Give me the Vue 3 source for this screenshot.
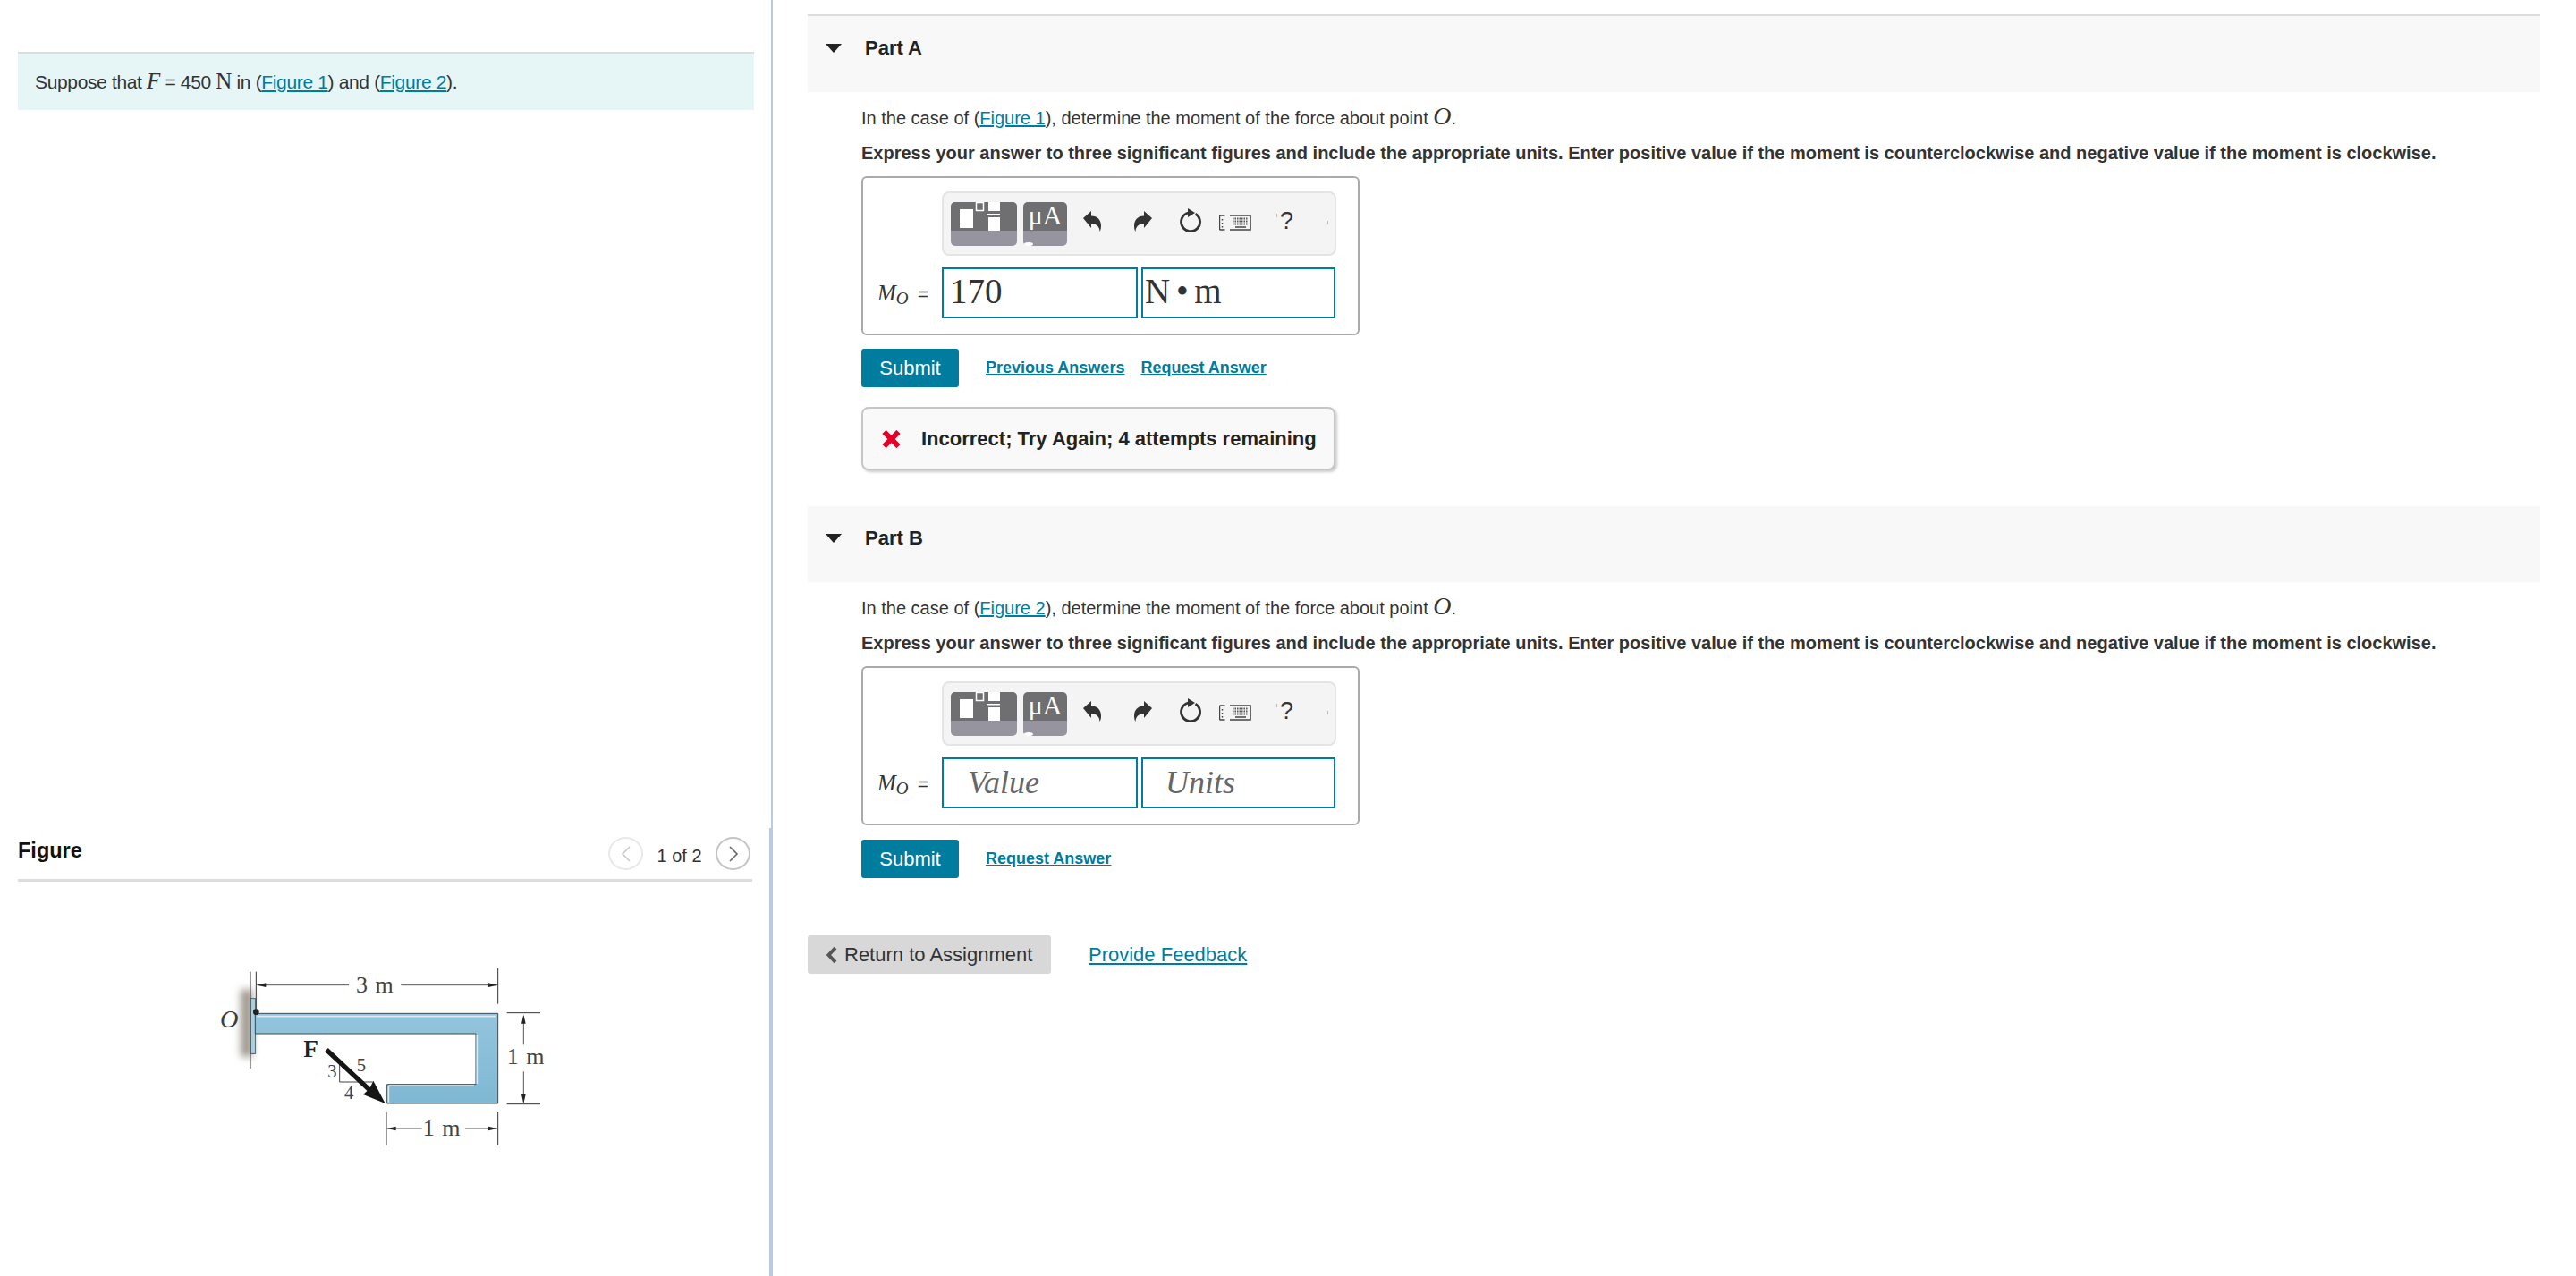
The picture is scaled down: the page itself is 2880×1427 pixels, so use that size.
<script setup>
const parts = [
  { id: 'A', fig: 'Figure 1', value: '170', units: 'N • m', answered: true },
  { id: 'B', fig: 'Figure 2', value: 'Value', units: 'Units', answered: false },
]
</script>

<template>
  <div class="page">
    <aside class="left">
      <div class="intro">
        Suppose that <i class="tex">F</i> = 450 <span class="texn">N</span> in (<a>Figure 1</a>) and (<a>Figure 2</a>).
      </div>
      <div class="fig-head">
        <h2>Figure</h2>
        <div class="pager">
          <span class="circ off"><svg width="14" height="20" viewBox="0 0 14 20"><path d="M11 2 3 10l8 8" fill="none" stroke="#c8c8c8" stroke-width="1.6"/></svg></span>
          <span class="count">1 of 2</span>
          <span class="circ"><svg width="14" height="20" viewBox="0 0 14 20"><path d="m3 2 8 8-8 8" fill="none" stroke="#666" stroke-width="1.6"/></svg></span>
        </div>
      </div>
      <svg class="figure" width="440" height="240" viewBox="0 0 1320 720">
        <defs>
          <filter id="blur" x="-100%" y="-30%" width="300%" height="160%"><feGaussianBlur stdDeviation="12"/></filter>
          <linearGradient id="steel" x1="0" y1="0" x2="0" y2="1"><stop offset="0" stop-color="#93c5dc"/><stop offset="1" stop-color="#7fb8d4"/></linearGradient>
        </defs>
        <rect x="208" y="140" width="38" height="225" fill="#9b958a" filter="url(#blur)"/>
        <path d="M240 80v325M259 80v140" stroke="#333" stroke-width="3" fill="none"/>
        <rect x="241" y="170" width="16" height="185" fill="#a9cfdf" stroke="#3a4a52" stroke-width="2.500"/>
        <path d="M256 220H1070V522H698V458H996V288H256Z" fill="url(#steel)" stroke="#3d4a52" stroke-width="3"/>
        <path d="M262 230H1062M703 462H990M1000 292V456M703 462V518" stroke="#dfe9ee" stroke-width="5" fill="none"/>
        <circle cx="259" cy="215" r="10" fill="#222"/>
        <path d="M1070 68v120M1100 218h112M1100 524h112M696 552v110M1070 552v110" stroke="#333" stroke-width="3" fill="none"/>
        <path d="M262 125H570M745 125H1068M1156 230V325M1156 415V518M698 606H815M960 606H1068" stroke="#333" stroke-width="2.500" fill="none"/>
        <path d="M262 125l30-7v14zM1068 125l-30-7v14zM1156 224l-7 30h14zM1156 522l-7-30h14zM698 606l30-7v14zM1068 606l-30-7v14z" fill="#222"/>
        <path d="M539 390V450H650" stroke="#444" stroke-width="3" fill="none"/>
        <path d="M495 342 645 482" stroke="#151515" stroke-width="16"/>
        <path d="M692 522 618 492 640 472 652 446Z" fill="#151515"/>
        <text x="594" y="150" class="fig-t">3 m</text>
        <text x="1100" y="391" class="fig-t">1 m</text>
        <text x="818" y="631" class="fig-t">1 m</text>
        <text x="138" y="266" class="fig-o">O</text>
        <text x="418" y="366" class="fig-f">F</text>
        <text x="499" y="436" class="fig-s">3</text>
        <text x="596" y="413" class="fig-s">5</text>
        <text x="555" y="506" class="fig-s">4</text>
      </svg>
    </aside>

    <main class="right">
      <section v-for="p in parts" :key="p.id" class="part" :class="'part-' + p.id">
        <header class="part-head">
          <span class="tri"></span>
          <h3>Part {{ p.id }}</h3>
        </header>
        <div class="body">
          <p class="q">In the case of (<a>{{ p.fig }}</a>), determine the moment of the force about point <i class="pt">O</i>.</p>
          <p class="ex">Express your answer to three significant figures and include the appropriate units. Enter positive value if the moment is counterclockwise and negative value if the moment is clockwise.</p>
          <div class="answer">
            <div class="toolbar">
              <svg class="tb1" width="74" height="49" viewBox="0 0 74 49">
                <rect width="74" height="49" rx="5" fill="#96949e"/>
                <path d="M0 32V5a5 5 0 0 1 5-5h64a5 5 0 0 1 5 5v27Z" fill="#6f6f71"/>
                <rect x="10" y="8" width="15" height="21" fill="#fff"/>
                <rect x="28.500" y="0.500" width="8" height="9" fill="none" stroke="#fff" stroke-width="1.500"/>
                <rect x="42" y="0" width="13" height="10" fill="#fff"/>
                <rect x="40" y="13" width="15" height="1.500" fill="#fff"/>
                <rect x="42" y="17" width="13" height="15" fill="#fff"/>
              </svg>
              <div class="tb2"><span>μA</span></div>
              <svg class="ic undo" width="21" height="24" viewBox="0 0 21 24"><path d="M0 9 9 1v5.500c7 0 11 4.500 11 11 0 2.500-.5 5-1.500 6.500 0-5-3.500-9-9.500-9v5Z" fill="#333"/></svg>
              <svg class="ic redo" width="21" height="24" viewBox="0 0 21 24"><path d="M21 9 12 1v5.500C5 6.500 1 11 1 17.500c0 2.500.5 5 1.500 6.500 0-5 3.500-9 9.500-9v5Z" fill="#333"/></svg>
              <svg class="ic refresh" width="24" height="26" viewBox="0 0 24 26"><path d="M17.500 6.200A10.500 10.500 0 1 1 9.500 5" fill="none" stroke="#333" stroke-width="2.800"/><path d="M9 0l8 5-8 5Z" fill="#333"/></svg>
              <svg class="ic kbd" width="36" height="18" viewBox="0 0 36 18"><path d="M6.500 1H1.500a1 1 0 0 0-1 1v14a1 1 0 0 0 1 1h5" fill="none" stroke="#444" stroke-width="1.400"/><path d="M3.500 5v1.500M3.500 9v1.500M3.500 13v1.500" stroke="#444" stroke-width="1.500"/><path d="M12 1h23v16H12" fill="none" stroke="#444" stroke-width="1.600"/><path d="M15 4.500h17M15 7.500h17M15 10.500h17" stroke="#555" stroke-width="2" stroke-dasharray="1.500 1"/><path d="M18 14h12" stroke="#444" stroke-width="1.500"/></svg>
              <span class="help">?</span>
              <span class="tick t1"></span>
              <span class="tick t2"></span>
            </div>
            <div class="inputs">
              <span class="mo"><i>M<sub>O</sub></i> <span class="eq">=</span></span>
              <div class="field" :class="{ ph: !p.answered, val: p.answered }">{{ p.value }}</div>
              <div class="field" :class="{ ph: !p.answered, unit: p.answered }">{{ p.units }}</div>
            </div>
          </div>
          <div class="actions">
            <button class="submit">Submit</button>
            <a v-if="p.answered" class="act first">Previous Answers</a>
            <a class="act" :class="{ first: !p.answered }">Request Answer</a>
          </div>
          <div v-if="p.answered" class="error">
            <svg width="21" height="20" viewBox="0 0 21 20"><path d="M2.500 2 18.500 18M18.500 2 2.500 18" stroke="#e2002b" stroke-width="6"/></svg>
            <strong>Incorrect; Try Again; 4 attempts remaining</strong>
          </div>
        </div>
      </section>
      <div class="foot">
        <button class="back"><svg width="13" height="20" viewBox="0 0 13 20"><path d="M11 2 3.500 10l7.500 8" fill="none" stroke="#555" stroke-width="4"/></svg>Return to Assignment</button>
        <a class="feedback">Provide Feedback</a>
      </div>
    </main>
  </div>
</template>

<style scoped>
.page { display: flex; width: 2880px; height: 1427px; background: #fff; color: #333; font-family: "Liberation Sans", Arial, sans-serif; overflow: hidden; }
a { color: #007c9e; text-decoration: underline; }
.left { width: 862px; flex: none; padding: 58px 19px 0 20px; box-sizing: border-box; position: relative; }
.left::after { content: ""; position: absolute; right: 0; top: 926px; bottom: 0; width: 2px; background: #b8cbe3; }
.right { flex: 1; border-left: 2px solid #b8cbe3; padding: 16px 40px 0 39px; min-width: 0; }
.intro { height: 65px; width: 823px; border-top: 2px solid #ddd; background: #e6f6f7; box-sizing: border-box; padding: 0 0 0 19px; line-height: 62px; font-size: 21px; letter-spacing: -0.35px; }
.tex, .texn { font-family: "Liberation Serif", serif; font-size: 25px; }
.fig-head { margin-top: 813px; height: 47px; border-bottom: 3px solid #ddd; display: flex; justify-content: space-between; width: 821px; }
.fig-head h2 { margin: 0; font-size: 23.500px; line-height: 30px; color: #111; }
.pager { display: flex; align-items: center; height: 37px; margin-right: 2px; }
.circ { width: 35px; height: 33px; border: 2px solid #c4c4c4; border-radius: 50%; display: flex; align-items: center; justify-content: center; }
.circ.off { border-color: #e8e8e8; }
.count { font-size: 20px; width: 81px; margin-top: 5px; text-align: center; color: #333; }
.figure { display: block; margin: 74px 0 0 180px; }
.fig-t { font: 78px "Liberation Serif", serif; letter-spacing: 3px; fill: #444; }
.fig-o { font: italic 85px "Liberation Serif", serif; fill: #3d3d3d; }
.fig-f { font: bold 82px "Liberation Serif", serif; fill: #222; }
.fig-s { font: 62px "Liberation Serif", serif; fill: #444; }

.part-head { display: flex; align-items: flex-start; background: #f8f8f8; height: 85px; }
.part-A .part-head { border-top: 2px solid #ddd; }
.part-B { margin-top: 40px; }
.tri { width: 0; height: 0; border: 9px solid transparent; border-top: 10px solid #222; border-bottom: 0; margin: 31px 0 0 20px; }
.part-head h3 { margin: 23px 0 0 26px; font-size: 22px; line-height: 26px; color: #222; }
.body { padding: 0 0 0 60px; }
.q { margin: 16px 0 0; font-size: 20px; line-height: 27px; color: #333; }
.pt { font-family: "Liberation Serif", serif; font-size: 28px; line-height: 20px; }
.ex { margin: 12px 0 0; font-size: 20px; line-height: 27px; font-weight: bold; color: #333; white-space: nowrap; }
.answer { margin-top: 12px; width: 557px; height: 178px; border: 2px solid #aaa; border-radius: 6px; box-sizing: border-box; padding: 15px 0 0 88px; }
.toolbar { display: flex; align-items: flex-start; width: 441px; height: 72px; background: #f4f4f4; border: 2px solid #e4e4e4; border-radius: 8px; box-sizing: border-box; padding: 10px 0 0 8px; position: relative; }
.tb2 { position: relative; width: 49px; height: 49px; margin-left: 7px; border-radius: 5px; background: linear-gradient(#6f6f71 0 65%, #96949e 65%); color: #fff; font: 30px/30px "Liberation Serif", serif; text-align: center; }
.tb2::after { content: ""; position: absolute; left: 1px; bottom: 0; width: 10px; height: 4px; border-radius: 50%; background: #fff; }
.ic { flex: none; }
.undo { margin: 9px 0 0 18px; }
.redo { margin: 9px 0 0 35px; }
.refresh { margin: 7px 0 0 31px; }
.kbd { margin: 14px 0 0 20px; }
.help { margin: 3px 0 0 32px; font-size: 27px; line-height: 36px; color: #333; }
.tick { position: absolute; width: 1px; height: 4px; background: #bbb; }
.t1 { left: 372px; top: 23px; }
.t2 { left: 429px; top: 31px; }
.inputs { display: flex; align-items: center; margin: 13px 0 0 -72px; }
.mo { width: 72px; font: 25px "Liberation Serif", serif; color: #333; white-space: nowrap; }
.mo sub { font-size: 19px; vertical-align: -4px; line-height: 0; }
.eq { font-family: "Liberation Sans", sans-serif; font-size: 21px; margin-left: 4px; }
.field { width: 219px; height: 57px; border: 2px solid #007c9e; box-sizing: border-box; margin-right: 4px; font: 39px/50px "Liberation Serif", serif; color: #333; padding-left: 7px; }
.field.unit { padding-left: 2px; word-spacing: -3px; }
.field + .field { width: 217px; margin-right: 0; }
.field.ph { font-size: 36px; line-height: 52px; font-style: italic; color: #666; padding-left: 27px; }
.field.ph + .field.ph { padding-left: 25px; }
.actions { display: flex; align-items: center; margin-top: 15px; height: 43px; }
.part-B .actions { margin-top: 16px; }
.submit { width: 109px; height: 43px; padding: 0; background: #007c9e; color: #fff; border: 0; border-radius: 3px; font: 22px "Liberation Sans", sans-serif; }
.act { font-weight: bold; font-size: 18px; margin-left: 18px; }
.act.first { margin-left: 30px; }
.error { margin-top: 22px; width: 530px; height: 71px; box-sizing: border-box; background: #f9f9f9; border: 2px solid #c6c6c6; border-radius: 8px; box-shadow: 2px 2px 3px #ccc; display: flex; align-items: center; padding-left: 21px; }
.error strong { margin-left: 23px; font-size: 22px; color: #222; white-space: nowrap; }
.foot { display: flex; align-items: center; margin-top: 64px; }
.back { width: 272px; height: 43px; background: #d8d8d8; border: 0; border-radius: 3px; padding: 0 0 0 20px; display: flex; align-items: center; gap: 8px; font: 22px "Liberation Sans", sans-serif; color: #333; }
.feedback { margin-left: 42px; font-size: 22px; }
</style>

<style>
html, body { margin: 0; background: #fff; }
</style>
